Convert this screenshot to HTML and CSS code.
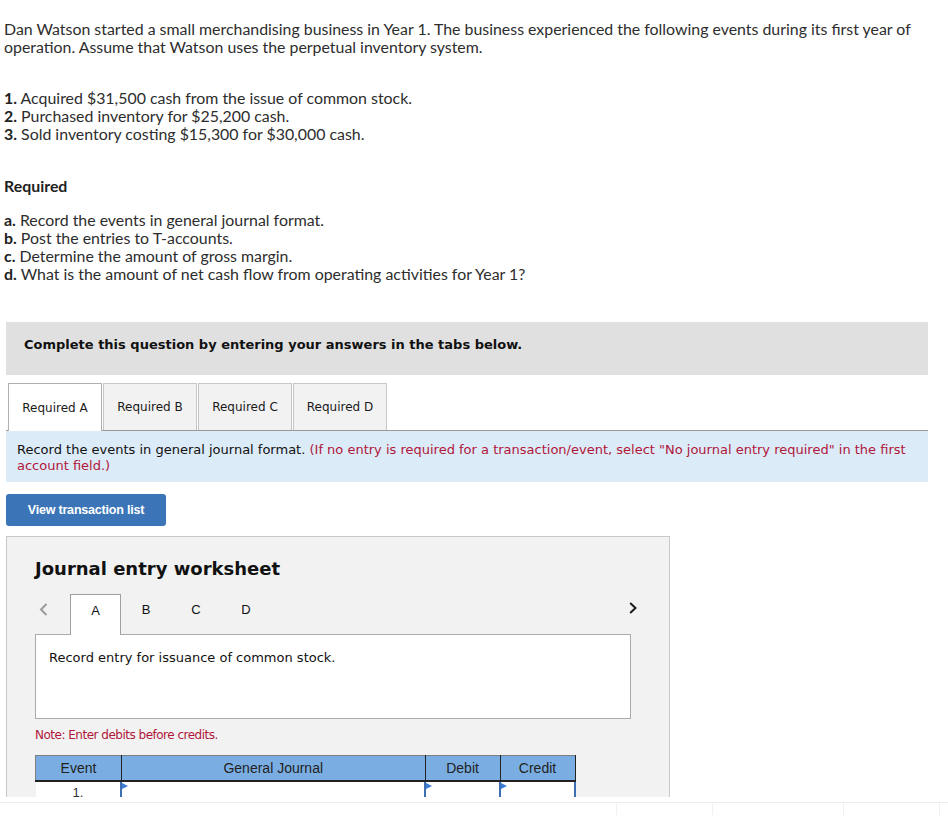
FILE: index.html
```html
<!DOCTYPE html>
<html lang="en">
<head>
    <meta charset="UTF-8">
    <meta name="viewport" content="width=device-width, initial-scale=1.0">
    <title>Question 1 - Merchandising Business</title>
    <link rel="stylesheet" href="styles.css">
</head>
<body>
    <div class="question">
        <p class="intro">Dan Watson started a small merchandising business in Year 1. The business experienced the following events during its first year of operation. Assume that Watson uses the perpetual inventory system.</p>

        <ol class="events">
            <li><b>1.</b> Acquired $31,500 cash from the issue of common stock.</li>
            <li><b>2.</b> Purchased inventory for $25,200 cash.</li>
            <li><b>3.</b> Sold inventory costing $15,300 for $30,000 cash.</li>
        </ol>

        <p class="req-title">Required</p>

        <ol class="reqs">
            <li><b>a.</b> Record the events in general journal format.</li>
            <li><b>b.</b> Post the entries to T-accounts.</li>
            <li><b>c.</b> Determine the amount of gross margin.</li>
            <li><b>d.</b> What is the amount of net cash flow from operating activities for Year 1?</li>
        </ol>
    </div>

    <div class="answer">
        <div class="prompt-bar">Complete this question by entering your answers in the tabs below.</div>

        <div class="tabs">
            <button class="tab active">Required A</button>
            <button class="tab">Required B</button>
            <button class="tab">Required C</button>
            <button class="tab">Required D</button>
        </div>

        <div class="instructions">
            Record the events in general journal format. <span class="hint">(If no entry is required for a transaction/event, select "No journal entry required" in the first account field.)</span>
        </div>

        <button class="btn-list">View transaction list</button>

        <div class="worksheet">
            <h2 class="ws-title">Journal entry worksheet</h2>

            <div class="ws-nav">
                <span class="ws-arrow prev">
                    <svg width="9" height="13" viewBox="0 0 9 13"><polyline points="7.5,1 2,6.5 7.5,12" fill="none" stroke="#9b9b9b" stroke-width="2"/></svg>
                </span>
                <span class="ws-tab active">A</span>
                <span class="ws-tab">B</span>
                <span class="ws-tab">C</span>
                <span class="ws-tab">D</span>
                <span class="ws-arrow next">
                    <svg width="8" height="12" viewBox="0 0 8 12"><polyline points="1.2,1 6.5,6 1.2,11" fill="none" stroke="#1b1b1b" stroke-width="2"/></svg>
                </span>
            </div>

            <div class="ws-desc">Record entry for issuance of common stock.</div>

            <p class="ws-note">Note: Enter debits before credits.</p>

            <table class="journal">
                <thead>
                    <tr>
                        <th class="col-event">Event</th>
                        <th class="col-account">General Journal</th>
                        <th class="col-amt">Debit</th>
                        <th class="col-amt">Credit</th>
                    </tr>
                </thead>
                <tbody>
                    <tr>
                        <td class="event-no">1.</td>
                        <td class="entry"></td>
                        <td class="entry"></td>
                        <td class="entry last"></td>
                    </tr>
                </tbody>
            </table>
        </div>
    </div>

    <div class="page-foot">
        <span></span><span></span><span></span><span></span><span></span>
    </div>
</body>
</html>
```

FILE: styles.css
```css
* {
    margin: 0;
    padding: 0;
    box-sizing: border-box;
}

body {
    font-family: Lato, "Open Sans", sans-serif;
    color: #2d2d2d;
    background: #ffffff;
    width: 948px;
    overflow: hidden;
}

/* question text */

.question {
    padding: 20px 4px 0;
    font-size: 15.9px;
    line-height: 18px;
}

.question b {
    font-weight: 700;
    color: #222;
}

.events {
    list-style: none;
    margin-top: 33px;
}

.req-title {
    font-weight: 700;
    color: #222;
    margin-top: 34px;
}

.reqs {
    list-style: none;
    margin-top: 16px;
}

/* answer area */

.answer {
    margin: 39px 0 0 6px;
    width: 922px;
    font-family: "DejaVu Sans", Verdana, sans-serif;
    color: #111;
}

.prompt-bar {
    background: #e0e0e0;
    height: 53px;
    padding: 14px 18px 0;
    font-size: 13px;
    font-weight: bold;
    line-height: 18px;
}

.tabs {
    display: flex;
    align-items: flex-start;
    gap: 1px;
    margin-top: 8px;
    padding-left: 2px;
    height: 48px;
    border-bottom: 1px solid #9a9a9a;
}

.tab {
    width: 94px;
    height: 47px;
    background: #f2f2f2;
    border: 1px solid #c6c6c6;
    border-bottom: none;
    font-family: "DejaVu Sans", Verdana, sans-serif;
    font-size: 12px;
    color: #1a1a1a;
    cursor: pointer;
}

.tab.active {
    height: 48px;
    background: #ffffff;
    border-color: #b0b0b0;
}

.instructions {
    background: #dcebf8;
    padding: 11px 11px 8px;
    font-size: 13px;
    line-height: 16px;
}

.hint {
    color: #b0173a;
}

.btn-list {
    display: block;
    margin-top: 12px;
    width: 160px;
    height: 32px;
    background: #3b75b8;
    border: none;
    border-radius: 3px;
    color: #ffffff;
    font-family: "Liberation Sans", Arial, sans-serif;
    font-size: 12.5px;
    font-weight: bold;
    letter-spacing: -0.2px;
    cursor: pointer;
}

/* journal entry worksheet */

.worksheet {
    margin-top: 10px;
    width: 664px;
    height: 261px;
    background: #f2f2f2;
    border: 1px solid #c8c8c8;
    border-bottom: none;
    padding: 21px 38px 0 28px;
    overflow: hidden;
}

.ws-title {
    font-size: 18px;
    line-height: 22px;
    font-weight: bold;
    color: #111;
    margin-bottom: 14px;
}

.ws-nav {
    display: flex;
    align-items: flex-start;
    height: 40px;
}

.ws-arrow {
    display: flex;
}

.ws-arrow.prev {
    width: 35px;
    padding: 9px 0 0 4px;
}

.ws-arrow.next {
    margin: 8px -6px 0 auto;
}

.ws-tab {
    width: 50px;
    height: 40px;
    padding-top: 8px;
    text-align: center;
    font-family: "Liberation Sans", Arial, sans-serif;
    font-size: 13px;
    line-height: 16px;
    color: #111;
}

.ws-tab.active {
    width: 51px;
    height: 41px;
    background: #ffffff;
    border: 1px solid #a0a0a0;
    border-bottom: none;
}

.ws-desc {
    height: 85px;
    background: #ffffff;
    border: 1px solid #ababab;
    padding: 15px 13px;
    font-size: 13px;
    line-height: 16px;
}

.ws-note {
    margin-top: 9px;
    font-size: 12px;
    line-height: 15px;
    letter-spacing: -0.5px;
    color: #b0173a;
}

.journal {
    margin-top: 12px;
    width: 541px;
    border-collapse: collapse;
    font-family: "Liberation Sans", Arial, sans-serif;
}

.journal th {
    height: 25px;
    background: #7aaee3;
    border: 1px solid #222;
    border-top-color: #808080;
    border-bottom: 2px solid #222;
    font-size: 14px;
    font-weight: normal;
    color: #222;
}

.journal th:first-child {
    border-left-color: #808080;
}

.col-event { width: 86px; }
.col-account { width: 304px; }
.col-amt { width: 75px; }

.journal td {
    height: 25px;
    background: #ffffff;
    vertical-align: top;
}

.event-no {
    text-align: center;
    font-size: 13px;
    line-height: 15px;
    color: #333;
    padding-top: 3px;
}

.entry {
    position: relative;
    border-left: 2px solid #3d6fb2;
}

.entry.last {
    border-right: 2px solid #3d6fb2;
}

/* small marker at the corner of each input cell */
.entry::before {
    content: "";
    position: absolute;
    top: 1px;
    left: 0;
    border-left: 6px solid #3a7bd5;
    border-top: 3px solid transparent;
    border-bottom: 3px solid transparent;
}

/* faint strip under the worksheet */

.page-foot {
    display: grid;
    grid-template-columns: 616px 96px 131px 96px 1fr;
    margin-top: 5px;
    height: 13px;
    border-top: 1px solid #ececec;
}

.page-foot span + span {
    border-left: 1px solid #f0f0f0;
}
```
